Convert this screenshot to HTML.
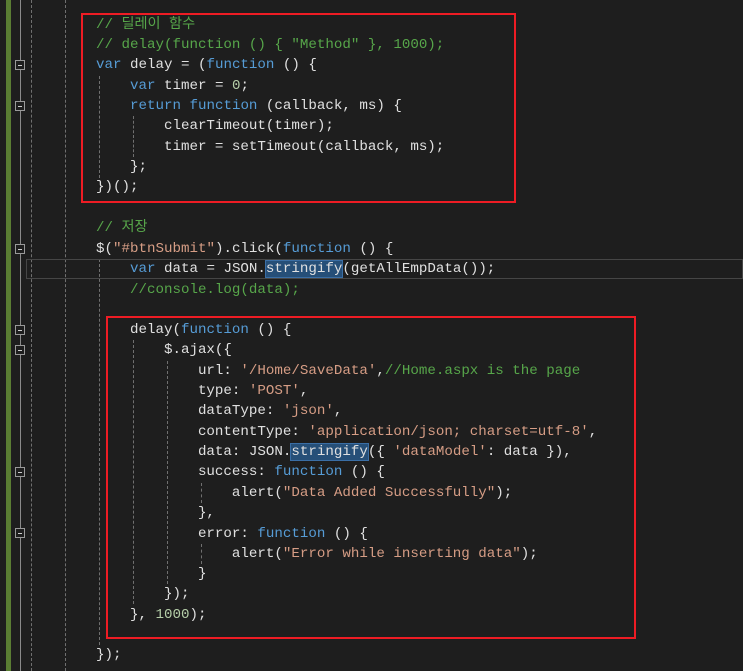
<!DOCTYPE html><html><head><meta charset="utf-8"><style>
body{margin:0;width:743px;height:671px;background:#1e1e1e;overflow:hidden;position:relative;font-family:"Liberation Mono","Noto Sans CJK KR",monospace;font-size:14.17px;color:#e0e0e0}
.l{position:absolute;left:96px;height:20.32px;line-height:20.32px;white-space:pre}
.c{color:#57a64a}.k{color:#569cd6}.s{color:#d69d85}.n{color:#b5cea8}
.g{position:absolute;width:0;border-left:1px dashed #707070}
.f{position:absolute;left:15px;width:8px;height:8px;border:1px solid #999;background:#1e1e1e}
.f:after{content:"";position:absolute;left:2px;top:4px;width:4px;height:1px;background:#ccc}
.r{position:absolute;border:2px solid #ee1c24}
.h{background:#264f78;outline:1px solid #3a6ea5}
</style></head><body>
<div style="position:absolute;left:6px;top:0;width:5px;height:671px;background:#5a7d33"></div>
<div style="position:absolute;left:20px;top:0;width:1px;height:671px;background:#8a8a8a"></div>
<div class="g" style="left:31px;top:0;height:671px"></div>
<div class="g" style="left:65px;top:0;height:671px"></div>
<div class="g" style="left:99px;top:76px;height:102px"></div>
<div class="g" style="left:99px;top:259px;height:386px"></div>
<div class="g" style="left:133px;top:116px;height:41px"></div>
<div class="g" style="left:133px;top:340px;height:264px"></div>
<div class="g" style="left:167px;top:361px;height:223px"></div>
<div class="g" style="left:201px;top:483px;height:20px"></div>
<div class="g" style="left:201px;top:544px;height:20px"></div>
<div style="position:absolute;left:26px;top:259px;width:717px;height:20px;border:1px solid #464646;box-sizing:border-box"></div>
<div class="f" style="top:60px"></div><div class="f" style="top:101px"></div><div class="f" style="top:244px"></div><div class="f" style="top:325px"></div><div class="f" style="top:345px"></div><div class="f" style="top:467px"></div><div class="f" style="top:528px"></div>
<div class="r" style="left:81px;top:13px;width:431px;height:186px"></div>
<div class="r" style="left:106px;top:316px;width:526px;height:319px"></div>
<div class="l c" style="top:15px">// 딜레이 함수</div>
<div class="l c" style="top:35px">// delay(function () { "Method" }, 1000);</div>
<div class="l" style="top:55px"><span class="k">var</span> delay = (<span class="k">function</span> () {</div>
<div class="l" style="top:76px">    <span class="k">var</span> timer = <span class="n">0</span>;</div>
<div class="l" style="top:96px">    <span class="k">return</span> <span class="k">function</span> (callback, ms) {</div>
<div class="l" style="top:116px">        clearTimeout(timer);</div>
<div class="l" style="top:137px">        timer = setTimeout(callback, ms);</div>
<div class="l" style="top:157px">    };</div>
<div class="l" style="top:177px">})();</div>
<div class="l c" style="top:218px">// 저장</div>
<div class="l" style="top:239px">$(<span class="s">"#btnSubmit"</span>).click(<span class="k">function</span> () {</div>
<div class="l" style="top:259px">    <span class="k">var</span> data = JSON.<span class="h">stringify</span>(getAllEmpData());</div>
<div class="l c" style="top:280px">    //console.log(data);</div>
<div class="l" style="top:320px">    delay(<span class="k">function</span> () {</div>
<div class="l" style="top:340px">        $.ajax({</div>
<div class="l" style="top:361px">            url: <span class="s">'/Home/SaveData'</span>,<span class="c">//Home.aspx is the page</span></div>
<div class="l" style="top:381px">            type: <span class="s">'POST'</span>,</div>
<div class="l" style="top:401px">            dataType: <span class="s">'json'</span>,</div>
<div class="l" style="top:422px">            contentType: <span class="s">'application/json; charset=utf-8'</span>,</div>
<div class="l" style="top:442px">            data: JSON.<span class="h">stringify</span>({ <span class="s">'dataModel'</span>: data }),</div>
<div class="l" style="top:462px">            success: <span class="k">function</span> () {</div>
<div class="l" style="top:483px">                alert(<span class="s">"Data Added Successfully"</span>);</div>
<div class="l" style="top:503px">            },</div>
<div class="l" style="top:524px">            error: <span class="k">function</span> () {</div>
<div class="l" style="top:544px">                alert(<span class="s">"Error while inserting data"</span>);</div>
<div class="l" style="top:564px">            }</div>
<div class="l" style="top:584px">        });</div>
<div class="l" style="top:605px">    }, <span class="n">1000</span>);</div>
<div class="l" style="top:645px">});</div>
</body></html>
